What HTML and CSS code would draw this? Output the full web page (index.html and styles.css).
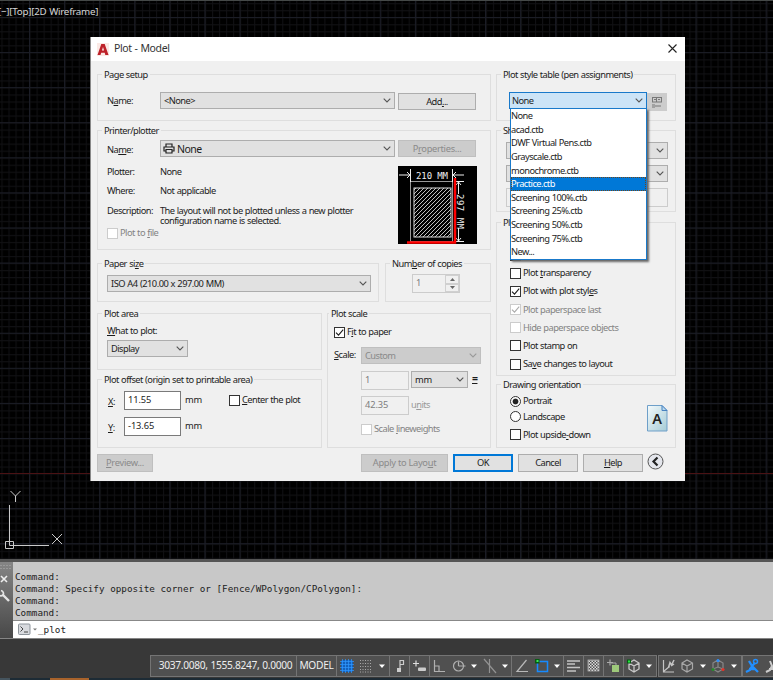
FILE: index.html
```html
<!DOCTYPE html>
<html lang="en">
<head>
<meta charset="utf-8">
<title>Plot - Model</title>
<link rel="stylesheet" href="styles.css">
</head>
<body>
<svg class="defs" width="0" height="0">
  <symbol id="chev" viewBox="0 0 8 5"><path d="M.7.7 4 4 7.300.7" fill="none" stroke="currentColor" stroke-width="1.1"/></symbol>
  <symbol id="tick" viewBox="0 0 9 9"><path d="M1 4.600 3.500 7.100 8.200 1.600" fill="none" stroke="currentColor" stroke-width="1.100"/></symbol>
</svg>
<main class="app">
  <section class="canvas">
    <svg class="grid" width="773" height="559">
      <defs>
        <pattern id="minor" width="7.02" height="7.02" x="1.500" y="3.200" patternUnits="userSpaceOnUse"><path d="M.5 0V7.020M0 .5H7.020" stroke="#111114" fill="none"/></pattern>
        <pattern id="major" width="35.08" height="35.08" x="29" y="17" patternUnits="userSpaceOnUse"><path d="M.5 0V35.080M0 .5H35.080" stroke="#1b1d26" fill="none"/></pattern>
      </defs>
      <rect width="773" height="559" fill="#000"/>
      <rect width="773" height="559" fill="url(#minor)"/>
      <rect width="773" height="559" fill="url(#major)"/>
      <path d="M0 473.500H773" stroke="#4a1214"/>
      <path d="M0 .5H773" stroke="#454948"/>
      <g fill="none" stroke="#c9c9c9">
        <path d="M9.500 505V545.500H49M5.500 541.500h8v7h-8z"/>
        <path d="M10.500 491l5 5 5-5M15.500 496v6M52 534l10 10M62 534l-10 10"/>
      </g>
    </svg>
    <div class="viewlabel">[−][Top][2D Wireframe]</div>
  </section>

  <section class="command">
    <div class="grip">
      <svg width="13" height="77"><path d="M0 3.500H12M0 6.500H12" stroke="#999" stroke-dasharray="2 1"/><path d="M1 14l6 6M7 14l-6 6" stroke="#eee" stroke-width="1.600"/><path d="M2.500 32.500l6.500 6.500" stroke="#e4e4e4" stroke-width="2.400"/><path d="M1 28.500a3 3 0 0 1 2 4.500 3 3 0 0 1-4 0" fill="none" stroke="#e4e4e4" stroke-width="1.700"/></svg>
    </div>
    <div class="console">
      <div class="history"><p>Command:</p><p>Command: Specify opposite corner or [Fence/WPolygon/CPolygon]:</p><p>Command:</p><p>Command:</p></div>
      <div class="prompt">
        <svg width="20" height="13"><rect x=".5" y="1" width="11.500" height="10.500" rx="1" fill="#d8dade" stroke="#8d949b"/><path d="M2.500 3.500l2.500 2.500-2.500 2.500M6 9h4" fill="none" stroke="#444"/><path d="M15 5.500h4l-2 2z" fill="#777"/></svg><span>_plot</span>
      </div>
    </div>
  </section>

  <footer class="status">
    <div class="bar">
      <div class="seg coords">3037.0080, 1555.8247, 0.0000</div>
      <div class="seg model">MODEL</div>
      <div class="seg s52"><svg width="51" height="20"><rect x="4" y="4" width="12" height="12" rx="2" fill="#1261bd"/><path d="M5.500 3v14M8.500 3v14M11.500 3v14M14.500 3v14M3 5.500h14M3 8.500h14M3 11.500h14M3 14.500h14" stroke="#3098ff" stroke-width=".7"/><path d="M23 4.500h12M23 7.500h12M23 10.500h12M23 13.500h12M23 16h12" stroke="#aaa" stroke-dasharray="1 1.500"/><path d="M42 8.500h6l-3 3.500z" fill="#fff"/></svg></div>
      <div class="seg s20"><svg width="20" height="20"><path d="M10 13V4.500h3.500v4H10" fill="none" stroke="#ccc" stroke-width="1.200"/><rect x="7" y="12" width="4" height="4" fill="#ccc"/></svg></div>
      <div class="seg s20"><svg width="20" height="20"><path d="M3 7.500h6M6 4.500v6" stroke="#ddd" stroke-width="1.200"/><rect x="8" y="11.500" width="8" height="3.500" rx="1" fill="#ccc"/></svg></div>
      <div class="seg s82"><svg width="81" height="20"><g fill="none" stroke="#b0b0b0" stroke-width="1.200"><path d="M4.500 4v11.500H15M4.500 10h4.500v5"/><circle cx="28.500" cy="10" r="5"/><path d="M28.500 10V5.500M28.500 10h7"/><path d="M54 3l12 14M59.500 3v14" stroke="#929292"/></g><path d="M41 8.500h6l-3 3.500zM72 8.500h6l-3 3.500z" fill="#fff"/></svg></div>
      <div class="seg s52"><svg width="51" height="20"><path d="M14.500 4 5 15.500H16" fill="none" stroke="#b8b8b8" stroke-width="1.200"/><path d="M25.500 5.500h10v10h-10z" fill="none" stroke="#168aff" stroke-width="1.500"/><rect x="23" y="3" width="4.500" height="4.500" fill="#075d12"/><rect x="24.500" y="4" width="2" height="2" fill="#40e955"/><path d="M42 8.500h6l-3 3.500z" fill="#fff"/></svg></div>
      <div class="seg s20"><svg width="20" height="20"><path d="M3 5h13M3 8h8M3 11.500h13M3 15h9" stroke="#c4c4c4" stroke-width="1.600"/></svg></div>
      <div class="seg s20"><svg width="20" height="20"><defs><pattern id="check" width="3" height="3" patternUnits="userSpaceOnUse"><path d="M0 0h1.500v1.500H0zM1.500 1.500H3V3H1.500z" fill="#ddd"/></pattern></defs><rect x="4" y="4" width="11" height="11" fill="url(#check)" stroke="#bbb" stroke-width=".7"/></svg></div>
      <div class="seg s20"><svg width="20" height="20"><path d="M3 6.500h6M6 3.500v6" stroke="#aaa" stroke-width="1.200"/><path d="M7 7h5v3" fill="none" stroke="#aaa"/><rect x="8" y="9" width="7" height="7" fill="#9ec97b"/></svg></div>
      <div class="seg s32"><svg width="32" height="20"><path d="M5 7l5-3 5 3v6l-5 3-5-3zM5 7l5 3 5-3M10 10v6" fill="none" stroke="#c9c9c9" stroke-width="1.300"/><rect x="3" y="3.500" width="4" height="4" fill="#075d12"/><rect x="4" y="4.500" width="2" height="2" fill="#24e33e"/><path d="M22 8.500h6l-3 3.500z" fill="#fff"/></svg></div>
      <div class="seg s84 apart"><svg width="82" height="20"><g fill="none" stroke="#c5c5c5" stroke-width="1.200"><path d="M4.500 4v12H15M4.500 15.500l6-5"/><path d="M9.500 11.500l1.500-5 1.500 2.500 2.500-5M12 10l3-2" stroke-width="1.500"/><path d="M23 7l5-3 5.500 3v6L28 16l-5-3zM23 7l5 3 5.500-3M28 10v6" stroke="#a9a9a9"/><path d="M54 7l5-3 5 3v6l-5 3-5-3zM59 11V4M59 11l-5 2M59 11l5 2" stroke="#888"/></g><circle cx="59" cy="4.500" r="1.500" fill="#278dff"/><circle cx="54" cy="13.500" r="1.600" fill="#268a2c"/><circle cx="64" cy="13.500" r="1.600" fill="#e23329"/><path d="M41 8.500h6l-3 3.500zM72 8.500h6l-3 3.500z" fill="#fff"/></svg></div>
      <div class="seg last"><svg width="32" height="20"><path d="M3 16l4-2 2-4-3-5M9 10l6 6M9 10l3-3M6 13h6" fill="none" stroke="#228fff" stroke-width="2.300"/><circle cx="12.500" cy="5.500" r="2" fill="none" stroke="#228fff" stroke-width="1.500"/><path d="M23 16l4-2 2-4-2-5M28 10l6 6M26 13h7" fill="none" stroke="#ccc" stroke-width="2"/></svg></div>
    </div>
    <div class="taskbar"><i class="task1"></i><i class="task2"></i></div>
  </footer>

  <section class="dialog">
    <header class="title">
      <svg width="12" height="13"><rect width="12" height="13" fill="#fbe9e5"/><path d="M.5 12 4.300 1h3.400l3.800 11H8.300l-.6-2.300H4.200L3.500 12zM6 4 4.900 7.500h2.200z" fill="#bd2129" fill-rule="evenodd"/></svg>
      <h1>Plot - Model</h1>
      <svg class="close" width="9" height="9"><path d="M.5.5l8 8M8.500.5l-8 8" stroke="#222" stroke-width="1.100"/></svg>
    </header>
    <div class="content">
      <div class="left">
        <section class="group page-setup">
          <h2>Page setup</h2>
          <div class="row"><label class="key">N<u>a</u>me:</label><div class="select wide">&lt;None&gt;<svg><use href="#chev"/></svg></div><button class="btn">Add<u>.</u>..</button></div>
        </section>
        <section class="group printer">
          <h2>Printer/plotter</h2>
          <div class="row"><label class="key low">Na<u>m</u>e:</label><div class="select wide device"><svg class="pr" width="12" height="11"><path d="M3 3.500V1h6v2.500M3 8H1V4h10v4H9M3 6.500h6v3.500H3z" fill="none" stroke="#222" stroke-width="1.200"/></svg>None<svg><use href="#chev"/></svg></div><button class="btn off">P<u>r</u>operties...</button></div>
          <div class="detail">
            <div class="facts">
              <div class="fact"><span class="key">Plotter:</span><span>None</span></div>
              <div class="fact"><span class="key">Where:</span><span>Not applicable</span></div>
              <div class="fact desc"><span class="key">Description:</span><span>The layout will not be plotted unless a new plotter<br>configuration name is selected.</span></div>
              <div class="check off"><i></i>Plot to <u>f</u>ile</div>
            </div>
            <svg class="preview" width="80" height="78" viewBox="0 0 80 78">
              <rect width="79" height="78" fill="#000"/>
              <defs><pattern id="hatch" width="4" height="4" patternUnits="userSpaceOnUse"><path d="M-1 5 5-1M-1 1 1-1M3 5 5 3" stroke="#d6d6d6" stroke-width=".9"/></pattern></defs>
              <rect x="12.500" y="15.500" width="42" height="60" fill="none" stroke="#999"/>
              <rect x="16" y="22" width="37" height="49" fill="url(#hatch)" stroke="#ddd"/>
              <g fill="none" stroke="#eee"><path d="M12.500 3v13M54.500 3v13M1 9h11M9 6l3 3-3 3M55 9h11M58 6l-3 3 3 3"/><path d="M56 15.500h10M56 75.500h10M60.500 16v12M58 19l2.500-3 2.500 3M60.500 62v13M58 72l2.500 3 2.500-3"/></g>
              <path d="M9 76.500h48V12" fill="none" stroke="#f00" stroke-width="2.500"/>
              <text class="dim" x="18" y="12.500" textLength="32">210 MM</text>
              <text class="dim" transform="translate(58.500 28) rotate(90)" textLength="35">297 MM</text>
            </svg>
          </div>
        </section>
        <div class="pair">
          <section class="group paper"><h2>Paper si<u>z</u>e</h2><div class="select">ISO A4 (210.00 x 297.00 MM)<svg><use href="#chev"/></svg></div></section>
          <section class="group copies"><h2>Num<u>b</u>er of copies</h2><div class="spinner"><span>1</span><div class="arrows"><b><svg width="5" height="3"><path d="M0 3h5L2.500 0z" fill="#666"/></svg></b><b><svg width="5" height="3"><path d="M0 0h5L2.500 3z" fill="#666"/></svg></b></div></div></section>
        </div>
        <div class="pair lower">
          <div class="stack">
            <section class="group area"><h2>Plot area</h2><div class="line what"><span><u>W</u>hat to plot:</span></div><div class="select">Display<svg><use href="#chev"/></svg></div></section>
            <section class="group offset"><h2>Plot offset (origin set to printable area)</h2>
              <div class="row"><label><u>X</u>:</label><div class="field">11.55</div><span class="unit">mm</span><div class="check"><i></i><u>C</u>enter the plot</div></div>
              <div class="row second"><label><u>Y</u>:</label><div class="field">-13.65</div><span class="unit">mm</span></div>
            </section>
          </div>
          <section class="group scale"><h2>Plot scale</h2>
            <div class="check"><i><svg><use href="#tick"/></svg></i>F<u>i</u>t to paper</div>
            <div class="row r1"><label><u>S</u>cale:</label><div class="select off">Custom<svg><use href="#chev"/></svg></div></div>
            <div class="row r2"><div class="field off">1</div><div class="select mm">mm<svg><use href="#chev"/></svg></div><span class="eq"><u>=</u></span></div>
            <div class="row r3"><div class="field off">42.35</div><span class="units">u<u>n</u>its</span></div>
            <div class="check off line-w"><i></i>Scale <u>l</u>ineweights</div>
          </section>
        </div>
      </div>
      <div class="right">
        <section class="group style-table"><h2>Plot style table (pen assignments)</h2>
          <div class="row">
            <div class="combo">None<svg><use href="#chev"/></svg>
              <ul class="menu"><li>None</li><li>acad.ctb</li><li>DWF Virtual Pens.ctb</li><li>Grayscale.ctb</li><li>monochrome.ctb</li><li class="on">Practice.ctb</li><li>Screening 100%.ctb</li><li>Screening 25%.ctb</li><li>Screening 50%.ctb</li><li>Screening 75%.ctb</li><li>New...</li></ul>
            </div>
            <div class="edit"><svg width="12" height="13"><path d="M1 1.500h10M1 6h10M3 3.500h2M7 3.500h2M1.500 1v5M5.500 1v5M10.500 1v5M1 9h3M4 10h6M1 11h3" stroke="#777" fill="none"/></svg></div>
          </div>
        </section>
        <section class="group shaded"><h2>Sh</h2>
          <div class="select"><svg><use href="#chev"/></svg></div><div class="select"><svg><use href="#chev"/></svg></div><div class="field off"></div>
        </section>
        <section class="group options"><h2>Pl</h2>
          <div class="check"><i></i>Plot object lineweights</div>
          <div class="check"><i></i>Plot <u>t</u>ransparency</div>
          <div class="check"><i><svg><use href="#tick"/></svg></i>Plot with plot styl<u>e</u>s</div>
          <div class="check off"><i><svg><use href="#tick"/></svg></i>Plot paperspace last</div>
          <div class="check off"><i></i>Hide paperspace ob<u>j</u>ects</div>
          <div class="check"><i></i>Plot stamp on</div>
          <div class="check"><i></i>Sa<u>v</u>e changes to layout</div>
        </section>
        <section class="group orient"><h2>Drawing orientation</h2>
          <div class="split">
            <div class="choices"><div class="check radio sel"><i></i>Portrait</div><div class="check radio"><i></i>Landscape</div><div class="check upside"><i></i>Plot upside<u>-</u>down</div></div>
            <svg class="sheet" width="21" height="27"><defs><linearGradient id="sh" x2="1" y2="1"><stop stop-color="#f4fafc"/><stop offset="1" stop-color="#a5cbd6"/></linearGradient></defs><path d="M.5.5H15l5 5v20.500H.5z" fill="url(#sh)" stroke="#6e9fc9"/><path d="M15 .5v5h5z" fill="#b9d9ef" stroke="#4882c0"/><text class="letter" x="10" y="19" text-anchor="middle">A</text></svg>
          </div>
        </section>
      </div>
    </div>
    <footer class="actions">
      <button class="btn off preview-btn"><u>P</u>review...</button>
      <button class="btn off apply">Apply to Layo<u>u</u>t</button>
      <button class="btn ok">OK</button>
      <button class="btn cancel">Cancel</button>
      <button class="btn help"><u>H</u>elp</button>
      <svg class="less" width="17" height="17"><circle cx="8.500" cy="8.500" r="7.500" fill="#e4e6ec" stroke="#555"/><path d="M10.500 4.500l-4 4 4 4" fill="none" stroke="#222" stroke-width="2.200"/></svg>
    </footer>
  </section>
</main>
</body>
</html>
```
FILE: styles.css
```css
* { box-sizing: border-box; }
body { margin: 0; font: 9.3px/12px "Noto Sans", sans-serif; letter-spacing: -.55px; word-spacing: .4px; color: #1c1c1c; }
h1, h2, p, ul { margin: 0; padding: 0; font-weight: normal; }
button { font: inherit; letter-spacing: inherit; padding: 0; color: inherit; }
svg { display: block; flex: none; }
u { text-underline-offset: 1px; text-decoration-thickness: 1px; }
.defs { position: absolute; }
.app { position: relative; width: 773px; height: 680px; overflow: hidden; display: flex; flex-direction: column; background: #383838; }

.canvas { height: 559px; position: relative; }
.viewlabel { position: absolute; left: -2px; top: 5px; font-size: 9.800px; line-height: 14px; color: #d5d5d5; letter-spacing: -.25px; white-space: nowrap; }

.command { height: 80px; border-top: 3px solid #555; border-bottom: 1px solid #858585; display: flex; font: 9.3px/12px "DejaVu Sans Mono", monospace; letter-spacing: 0; word-spacing: 0; color: #222; }
.grip { width: 13px; background: linear-gradient(#858585, #484848); }
.console { flex: 1; display: flex; flex-direction: column; }
.history { background: #c8c8c8; height: 59px; padding: 9px 0 0 2px; border-bottom: 1px solid #888; }
.prompt { flex: 1; background: #fff; padding-left: 5px; display: flex; align-items: center; }

.status { height: 41px; display: flex; flex-direction: column; }
.bar { margin: 16px 0 0 150px; height: 22px; display: flex; }
.seg { flex: none; height: 22px; background: #505050; border: 1px solid #747474; border-left-width: 0; }
.coords, .model { font-size: 10.200px; line-height: 19px; letter-spacing: -.3px; color: #eee; text-align: center; white-space: nowrap; }
.coords { width: 147px; border-left-width: 1px; padding-left: 4px; }
.model { width: 40px; }
.s20 { width: 20px; } .s32 { width: 33px; } .s52 { width: 52px; } .s82 { width: 82px; } .s84 { width: 84px; }
.s52:nth-child(3) { width: 53px; }
.apart { border-left-width: 1px; margin-left: 1px; }
.last { width: 34px; border-left-width: 1px; overflow: hidden; }
.taskbar { margin-top: 1px; height: 2px; background: #1d2b35; display: flex; }
.task1 { width: 10px; background: #45545e; }
.task2 { width: 39px; margin-left: 40px; background: #a9632b; }

.dialog { position: absolute; left: 90px; top: 37px; width: 595px; height: 444px; background: #f0f0f0; border-left: 1px solid #888; }
.title { height: 24px; background: #fff; display: flex; align-items: center; padding: 0 8px 0 6px; }
.title h1 { margin: -2px 0 0 5px; font-size: 10.500px; letter-spacing: -.35px; color: #333; flex: 1; }
.title .close { margin-top: -2px; }
.content { display: flex; gap: 5px; padding: 13px 0 0 6px; }
.left { width: 394px; }
.right { width: 180px; }
.group { border: 1px solid #dedede; padding-left: 9px; }
.group h2 { width: max-content; height: 12px; margin: -6px 0 0 -5px; padding: 0 2px; background: #f0f0f0; font-size: inherit; white-space: nowrap; }
.row { display: flex; }
.key { width: 53px; flex: none; line-height: 17px; }
.key.low { line-height: 20px; }
.select, .combo { position: relative; height: 17px; border: 1px solid #adadad; background: #e1e1e1; padding: 0 3px 0 3px; display: flex; align-items: center; white-space: nowrap; }
.select > svg:last-child, .combo > svg { width: 8px; height: 5px; margin-left: auto; color: #555; }
.wide { width: 235px; }
.btn { height: 17px; width: 78px; margin-left: 3px; border: 1px solid #adadad; background: #e1e1e1; display: block; flex: none; }
.btn.off, .select.off { background: #ccc; border-color: #bfbfbf; color: #8a8a8a; }
.select.off > svg:last-child { color: #999; }
.field { height: 19px; border: 1px solid #7a7a7a; background: #fff; padding-left: 3px; line-height: 16px; letter-spacing: -.1px; }
.field.off { border-color: #ccc; background: #f0f0f0; color: #7d7d7d; }
.check { height: 12px; display: flex; align-items: center; white-space: pre; }
.check i { width: 11px; height: 11px; border: 1px solid #333; background: #fff; margin-right: 2px; flex: none; }
.check i svg { width: 9px; height: 9px; }
.check.off { color: #838383; }
.check.off i { border-color: #ccc; color: #aaa; }

.page-setup { height: 47px; }
.page-setup .row { margin-top: 11px; }
.page-setup .btn { margin-top: 1px; }
.printer { height: 120px; margin-top: 9px; }
.printer .row { margin-top: 3px; }
.device { font-size: 10.500px; letter-spacing: -.5px; padding-left: 2px; }
.pr { margin-right: 2px; }
.detail { display: flex; }
.facts { width: 291px; padding-top: 3px; }
.fact { display: flex; height: 19px; line-height: 18px; white-space: nowrap; }
.fact .key { line-height: inherit; }
.desc { height: 26px; line-height: 10px; padding-top: 5px; }
.preview { margin-top: 6px; }
.dim { font: 9px "DejaVu Sans Mono", monospace; fill: #eee; letter-spacing: 0; word-spacing: 0; }
.pair { display: flex; gap: 6px; margin-top: 13px; }
.pair.lower { gap: 5px; margin-top: 11px; }
.paper { width: 282px; height: 39px; }
.paper .select { width: 264px; margin-top: 5px; letter-spacing: -.5px; }
.copies { width: 106px; height: 39px; }
.spinner { width: 48px; height: 19px; margin: 4px 0 0 17px; border: 1px solid #ccc; display: flex; justify-content: space-between; padding-left: 3px; color: #7d7d7d; line-height: 16px; }
.arrows { width: 14px; display: flex; flex-direction: column; }
.arrows b { flex: 1; border: 1px solid #d0d0d0; display: grid; place-items: center; }
.stack { width: 225px; }
.area { height: 57px; }
.what { margin-top: 5px; }
.area .select { width: 81px; margin-top: 3px; }
.offset { height: 69px; margin-top: 9px; }
.offset .row { margin-top: 5px; }
.offset .row.second { margin-top: 7px; }
.offset label { width: 17px; padding: 2px 0 0 1px; line-height: 17px; }
.offset .field { width: 57px; }
.unit { width: 48px; padding-left: 4px; line-height: 17px; letter-spacing: -.3px; }
.offset .check { margin-top: 3px; }
.scale { width: 164px; height: 135px; padding-left: 6px; }
.scale > .check { margin-top: 6px; }
.r1 { margin-top: 9px; }
.r1 label { width: 27px; line-height: 16px; }
.r1 .select { width: 120px; }
.r2 { margin: 7px 0 0 27px; }
.scale .field { width: 48px; }
.mm { width: 57px; margin-left: 2px; letter-spacing: -.3px; }
.eq { margin-left: 4px; line-height: 15px; font-weight: bold; font-size: 10.500px; }
.r3 { margin: 6px 0 0 27px; }
.units { color: #999; margin-left: 2px; line-height: 18px; }
.scale > .line-w { margin: 8px 0 0 27px; }

.style-table { height: 47px; padding-left: 12px; }
.right .group h2 { margin-left: -5px; }
.right .style-table h2 { margin-left: -8px; }
.style-table .row { margin-top: 11px; }
.combo { width: 138px; background: #cce4f7; border-color: #1979ca; padding-left: 2px; }
.edit { width: 20px; height: 18px; background: #ccc; margin: 1px 0 0; display: grid; place-items: center; }
.menu { position: absolute; z-index: 2; left: 0; top: 15px; width: 137px; height: 152px; list-style: none; background: #fff; border: 1px solid #1979ca; box-shadow: 2px 2px 2px #666; }
.menu li { height: 13.640px; line-height: 13.640px; padding-left: 0; }
.menu .on { background: #0078d7; color: #fff; outline: 1px dotted #6b4720; outline-offset: -1px; }
.shaded { height: 82px; margin-top: 9px; }
.shaded .select { width: 162px; margin-top: 5px; }
.shaded .select + .select, .shaded .field { margin-top: 6px; }
.shaded .field { width: 162px; }
.options { height: 154px; margin-top: 10px; padding-left: 13px; }
.right .options h2 { margin-left: -9px; }
.options .check { margin-top: 6.200px; }
.options h2 + .check { margin-top: 20px; }
.orient { height: 64px; margin-top: 8px; padding-left: 13px; }
.right .orient h2 { margin-left: -9px; }
.split { display: flex; }
.choices { width: 137px; padding-top: 4px; }
.radio { margin-bottom: 3.500px; }
.radio i { border-radius: 50%; }
.sel i { background: radial-gradient(circle, #222 0 2.500px, #fff 3.300px); }
.check.upside { margin-top: 6px; }
.sheet { margin-top: 14px; }
.letter { font: 600 14.500px "Noto Sans", sans-serif; fill: #222; letter-spacing: 0; }
.actions { display: flex; margin-top: 6px; padding-left: 6px; }
.actions .btn { margin-left: 0; height: 18px; }
.actions .preview-btn { width: 56px; letter-spacing: -.3px; }
.actions .apply { width: 87px; margin-left: 208px; letter-spacing: -.3px; }
.printer .btn { letter-spacing: -.3px; }
.actions .ok { width: 60px; margin-left: 5px; border: 2px solid #0078d7; }
.actions .cancel { width: 60px; margin-left: 5px; }
.actions .help { width: 60px; margin-left: 5px; }
.less { margin: -1px 0 0 4px; }
```
